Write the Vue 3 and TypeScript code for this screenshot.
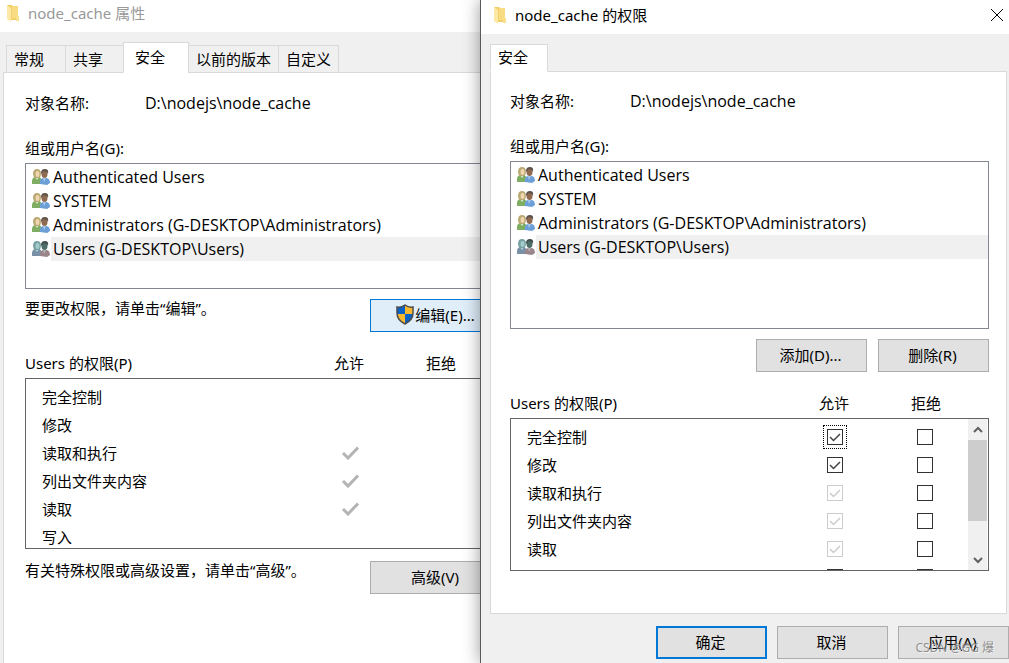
<script setup lang="ts">
import { ref } from 'vue'

interface Permission {
  name: string
  granted: boolean
  allow: boolean
  inherited: boolean
  deny: boolean
}

const objectName = 'D:\\nodejs\\node_cache'
const tabs = ['常规', '共享', '安全', '以前的版本', '自定义']
const activeTab = ref('安全')
const principals = [
  'Authenticated Users',
  'SYSTEM',
  'Administrators (G-DESKTOP\\Administrators)',
  'Users (G-DESKTOP\\Users)',
]
const selected = ref(3)

const permissions = ref<Permission[]>([
  { name: '完全控制', granted: false, allow: true, inherited: false, deny: false },
  { name: '修改', granted: false, allow: true, inherited: false, deny: false },
  { name: '读取和执行', granted: true, allow: true, inherited: true, deny: false },
  { name: '列出文件夹内容', granted: true, allow: true, inherited: true, deny: false },
  { name: '读取', granted: true, allow: true, inherited: true, deny: false },
  { name: '写入', granted: false, allow: false, inherited: false, deny: false },
])
</script>

<template>
  <main class="desktop">
    <svg class="defs" aria-hidden="true">
      <symbol id="folder" viewBox="0 0 14 19">
        <path d="M1 1h5l1 1h5v14H3z" fill="#f3cf69" />
        <path d="M6 2h6v12H6z" fill="#f8dc83" />
        <path d="M1 1l4 3v14l-4-3z" fill="#fde9a5" />
        <path d="M10 12h3v5h-3z" fill="#fbe08b" />
      </symbol>
      <symbol id="people" viewBox="0 0 18 16">
        <path d="M0 15v-3q0-3 3-4h4q2 1 3 3v4z" fill="#7fae62" />
        <path d="M3 8l2 3 2-3z" fill="#dce9cc" />
        <path d="M1 5q0-5 4-5t4 5l-1 4H2z" fill="#b9a973" />
        <ellipse cx="5.500" cy="5" rx="2" ry="3" fill="#f0d6ae" />
        <path d="M8 15q-1-5 3-6h4q3 1 3 5l-3 2z" fill="#6c9fd8" />
        <path d="M11 9l1 4 2-4z" fill="#a9cbee" />
        <ellipse cx="12.500" cy="5" rx="3" ry="4" fill="#8f6a50" />
        <path d="M9 4q0-4 4-4t3 5l-1-2-4-1-1 3z" fill="#5e514b" />
      </symbol>
    </svg>

    <section class="window properties" aria-labelledby="props-title">
      <header class="titlebar">
        <svg class="folder"><use href="#folder" /></svg>
        <h1 id="props-title">node_cache 属性</h1>
      </header>
      <div class="body">
        <nav class="tabs" role="tablist">
          <button
            v-for="tab in tabs"
            :key="tab"
            type="button"
            role="tab"
            class="tab"
            :class="{ active: tab === activeTab }"
            :aria-selected="tab === activeTab"
            @click="activeTab = tab"
          >{{ tab }}</button>
        </nav>
        <div class="panel" role="tabpanel">
          <div class="object"><span class="caption">对象名称:</span><span class="latin">{{ objectName }}</span></div>
          <div id="props-groups" class="group-label">组或用户名(G):</div>
          <ul class="listbox" role="listbox" aria-labelledby="props-groups">
            <li
              v-for="(name, i) in principals"
              :key="name"
              role="option"
              :aria-selected="i === selected"
              :class="{ selected: i === selected }"
            >
              <svg class="people"><use href="#people" /></svg>
              <span class="latin">{{ name }}</span>
            </li>
          </ul>
          <div class="action edit-row">
            <p>要更改权限，请单击“编辑”。</p>
            <button type="button" class="btn wide hot">
              <svg class="shield" viewBox="0 0 20 21" aria-hidden="true">
                <path d="M10 1q4 3 8 2v6q0 7-8 11-8-4-8-11V3q4 1 8-2z" fill="#fdb92e" />
                <path d="M10 1v9H2V3q4 1 8-2zM10 10h8q-1 6-8 10z" fill="#0a62c4" />
                <path d="M10 1q4 3 8 2v6q0 7-8 11-8-4-8-11V3q4 1 8-2z" fill="none" stroke="#4c4c4c" stroke-width="1.500" />
              </svg>编辑(E)...
            </button>
          </div>
          <table class="permissions">
            <thead>
              <tr><th scope="col">Users 的权限(P)</th><th scope="col">允许</th><th scope="col">拒绝</th></tr>
            </thead>
            <tbody>
              <tr v-for="p in permissions" :key="p.name">
                <td>{{ p.name }}</td>
                <td>
                  <svg v-if="p.granted" class="granted" viewBox="0 0 18 14" role="img" aria-label="允许">
                    <path d="M2 7l5 5L17 1.500" />
                  </svg>
                </td>
                <td></td>
              </tr>
            </tbody>
          </table>
          <div class="action advanced-row">
            <p>有关特殊权限或高级设置，请单击“高级”。</p>
            <button type="button" class="btn wide">高级(V)</button>
          </div>
        </div>
      </div>
    </section>

    <section class="window dialog" role="dialog" aria-labelledby="perm-title">
      <header class="titlebar">
        <svg class="folder"><use href="#folder" /></svg>
        <h2 id="perm-title">node_cache 的权限</h2>
        <button type="button" class="close" aria-label="关闭">
          <svg viewBox="0 0 14 14"><path d="M1 1l12 12M13 1L1 13" /></svg>
        </button>
      </header>
      <div class="body">
        <nav class="tabs" role="tablist">
          <button type="button" role="tab" class="tab active" aria-selected="true">安全</button>
        </nav>
        <div class="panel" role="tabpanel">
          <div class="object"><span class="caption">对象名称:</span><span class="latin">{{ objectName }}</span></div>
          <div id="perm-groups" class="group-label">组或用户名(G):</div>
          <ul class="listbox" role="listbox" aria-labelledby="perm-groups">
            <li
              v-for="(name, i) in principals"
              :key="name"
              role="option"
              :aria-selected="i === selected"
              :class="{ selected: i === selected }"
              @click="selected = i"
            >
              <svg class="people"><use href="#people" /></svg>
              <span class="latin">{{ name }}</span>
            </li>
          </ul>
          <div class="list-actions">
            <button type="button" class="btn">添加(D)...</button>
            <button type="button" class="btn">删除(R)</button>
          </div>
          <div class="scroll-area">
            <table class="permissions">
              <thead>
                <tr><th scope="col">Users 的权限(P)</th><th scope="col">允许</th><th scope="col">拒绝</th></tr>
              </thead>
              <tbody>
                <tr v-for="(p, i) in permissions" :key="p.name">
                  <td>{{ p.name }}</td>
                  <td>
                    <label class="check" :class="{ focused: i === 0, disabled: p.inherited }">
                      <input v-model="p.allow" type="checkbox" :disabled="p.inherited" :aria-label="`${p.name} 允许`" />
                      <svg v-if="p.allow" viewBox="0 0 16 16"><path d="M3 8l3.500 3.500L13 5" /></svg>
                    </label>
                  </td>
                  <td>
                    <label class="check">
                      <input v-model="p.deny" type="checkbox" :aria-label="`${p.name} 拒绝`" />
                      <svg v-if="p.deny" viewBox="0 0 16 16"><path d="M3 8l3.500 3.500L13 5" /></svg>
                    </label>
                  </td>
                </tr>
              </tbody>
            </table>
            <div class="scrollbar">
              <button type="button" aria-label="向上滚动"><svg viewBox="0 0 10 8"><path d="M1 6l4-4 4 4" /></svg></button>
              <div class="thumb"></div>
              <button type="button" aria-label="向下滚动"><svg viewBox="0 0 10 8"><path d="M1 2l4 4 4-4" /></svg></button>
            </div>
          </div>
        </div>
        <footer>
          <button type="button" class="btn primary">确定</button>
          <button type="button" class="btn">取消</button>
          <button type="button" class="btn">应用(A)</button>
        </footer>
      </div>
    </section>
    <div class="watermark">CSDN @GG 爆</div>
  </main>
</template>

<style>
body {
  margin: 0;
}
</style>

<style scoped>
* {
  box-sizing: border-box;
}
.desktop {
  position: relative;
  display: grid;
  grid-template-columns: minmax(0, 480fr) minmax(0, 529fr);
  min-height: 100vh;
  overflow: hidden;
  background: #fff;
  color: #000;
  font: 15px/20px "Noto Sans", "Noto Sans CJK SC", sans-serif;
}
.defs {
  position: absolute;
  width: 0;
  height: 0;
}
button {
  font: inherit;
  color: inherit;
  border-radius: 0;
  padding: 0;
  margin: 0;
}
h1,
h2,
p {
  margin: 0;
  font-size: 15px;
  line-height: 18px;
  font-weight: 400;
}
.latin {
  font-family: "Open Sans", "Noto Sans", "Noto Sans CJK SC", sans-serif;
  font-size: 16px;
}
.window {
  display: flex;
  flex-direction: column;
  background: #f0f0f0;
}
.properties {
  margin-right: -44px;
}
.dialog {
  z-index: 1;
  border-left: 1px solid #5a5a5a;
  box-shadow: 0 0 16px rgba(0, 0, 0, 0.4);
}
.titlebar {
  display: flex;
  align-items: center;
  background: #fff;
}
.properties .titlebar {
  height: 32px;
  padding: 0 6px 6px;
  gap: 8px;
  color: #999;
}
.dialog .titlebar {
  height: 34px;
  padding: 0 5px 4px 12px;
  gap: 8px;
}
.folder {
  width: 14px;
  height: 19px;
}
.close {
  margin-left: auto;
  width: 14px;
  height: 14px;
  border: 0;
  background: none;
  display: flex;
}
.close svg {
  width: 14px;
  height: 14px;
  fill: none;
  stroke: #000;
}
.body {
  flex: 1;
  display: flex;
  flex-direction: column;
}
.properties .body {
  padding: 10px 2px 0 3px;
}
.dialog .body {
  padding: 10px 0 4px 9px;
}
.tabs {
  display: flex;
  align-items: flex-end;
  position: relative;
  z-index: 1;
  margin-bottom: -1px;
}
.properties .tabs {
  height: 31px;
  padding-left: 3px;
}
.dialog .tabs {
  height: 28px;
}
.tab {
  height: 28px;
  min-width: 60px;
  padding: 0 7px;
  text-align: left;
  border: 1px solid #d9d9d9;
  margin-right: -1px;
  background: #f0f0f0;
  white-space: nowrap;
}
.tab.active {
  height: 100%;
  min-width: 58px;
  padding: 0 7px 2px;
  background: #fff;
  border-bottom-color: #fff;
}
.properties .tab.active {
  min-width: 66px;
  margin-left: -1px;
  padding-left: 11px;
}
.panel {
  background: #fff;
  border: 1px solid #d9d9d9;
}
.properties .panel {
  flex: 1;
  border-bottom: 0;
  padding: 20px 17px 0 21px;
}
.dialog .panel {
  margin-right: 2px;
  padding: 19px 17px 42px 19px;
}
.object {
  display: flex;
}
.caption {
  width: 120px;
}
.group-label {
  margin: 25px 0 5px;
}
.listbox {
  list-style: none;
  margin: 0;
  padding: 1px 0 0 5px;
  border: 1px solid #828790;
  height: 168px;
  overflow: hidden;
}
.properties .listbox {
  height: 126px;
}
.listbox li {
  display: flex;
  align-items: center;
  height: 24px;
}
.listbox li span {
  flex: 1;
  padding-left: 2px;
  line-height: 24px;
  white-space: nowrap;
}
.selected span {
  background: #f0f0f0;
}
.people {
  width: 18px;
  height: 16px;
  margin: 0 1px 0 1px;
}
.selected .people {
  filter: saturate(0.6) sepia(0.3) hue-rotate(130deg) brightness(0.85);
}
.action {
  display: flex;
  justify-content: space-between;
  align-items: flex-start;
}
.edit-row {
  margin: 10px 0 21px;
}
.advanced-row {
  margin-top: 12px;
}
.btn {
  display: flex;
  align-items: center;
  justify-content: center;
  width: 111px;
  height: 33px;
  padding: 0 2px 2px 0;
  border: 1px solid #adadad;
  background: #e1e1e1;
  white-space: nowrap;
}
.btn.wide {
  width: 134px;
  padding-right: 4px;
}
.btn.hot {
  background: #e0eefa;
  border-color: #0078d7;
}
.btn.primary {
  border: 2px solid #0078d7;
}
.shield {
  width: 20px;
  height: 21px;
}
.list-actions {
  display: flex;
  justify-content: flex-end;
  gap: 11px;
  margin: 10px 0 21px;
}
.permissions {
  display: block;
}
.permissions thead {
  display: block;
}
.permissions tbody {
  display: block;
  border: 1px solid #646464;
  margin-top: 5px;
  padding-top: 4px;
  height: 153px;
  overflow-y: auto;
  scrollbar-width: none;
}
.properties .permissions tbody {
  height: 171px;
}
.permissions tr {
  display: grid;
  grid-template-columns: 1fr 90px 90px;
  align-items: center;
  padding-right: 18px;
}
.permissions thead tr {
  grid-template-columns: 1fr 94px 90px;
}
.permissions tbody tr {
  height: 28px;
  padding-left: 16px;
}
.permissions th,
.permissions td {
  padding: 0;
  font-weight: 400;
  text-align: center;
}
.permissions td {
  display: flex;
  justify-content: center;
}
.permissions th:first-child {
  text-align: left;
}
.permissions td:first-child {
  justify-content: flex-start;
}
.granted {
  width: 18px;
  height: 14px;
  fill: none;
  stroke: #b4b4b4;
  stroke-width: 3;
}
.check {
  display: grid;
  width: 24px;
  height: 24px;
  place-items: center;
}
.check.focused {
  border: 1px dotted #000;
}
.check input,
.check svg {
  grid-area: 1 / 1;
  width: 16px;
  height: 16px;
  margin: 0;
}
.check input {
  appearance: none;
  border: 1px solid #333;
  background: #fff;
}
.check svg {
  fill: none;
  stroke: #444;
  stroke-width: 1.5;
  pointer-events: none;
}
.check.disabled input {
  border-color: #ccc;
}
.check.disabled svg {
  stroke: #ccc;
}
.scroll-area {
  display: grid;
}
.scroll-area > * {
  grid-area: 1 / 1;
}
.scrollbar {
  justify-self: end;
  align-self: end;
  display: flex;
  flex-direction: column;
  width: 19px;
  height: 151px;
  margin: 0 2px 1px 0;
  background: #f0f0f0;
}
.scrollbar button {
  display: grid;
  place-items: center;
  height: 21px;
  border: 0;
  background: none;
}
.scrollbar button:last-child {
  margin-top: auto;
}
.scrollbar svg {
  width: 10px;
  height: 8px;
  fill: none;
  stroke: #606060;
  stroke-width: 2;
}
.thumb {
  height: 81px;
  background: #cdcdcd;
}
footer {
  display: flex;
  justify-content: flex-end;
  gap: 10px;
  margin-top: 12px;
}
.watermark {
  position: absolute;
  z-index: 2;
  right: 15px;
  bottom: 5px;
  font-size: 12px;
  color: rgba(120, 120, 120, 0.8);
  text-shadow: 1px 1px 0 rgba(255, 255, 255, 0.6);
  pointer-events: none;
}
</style>
